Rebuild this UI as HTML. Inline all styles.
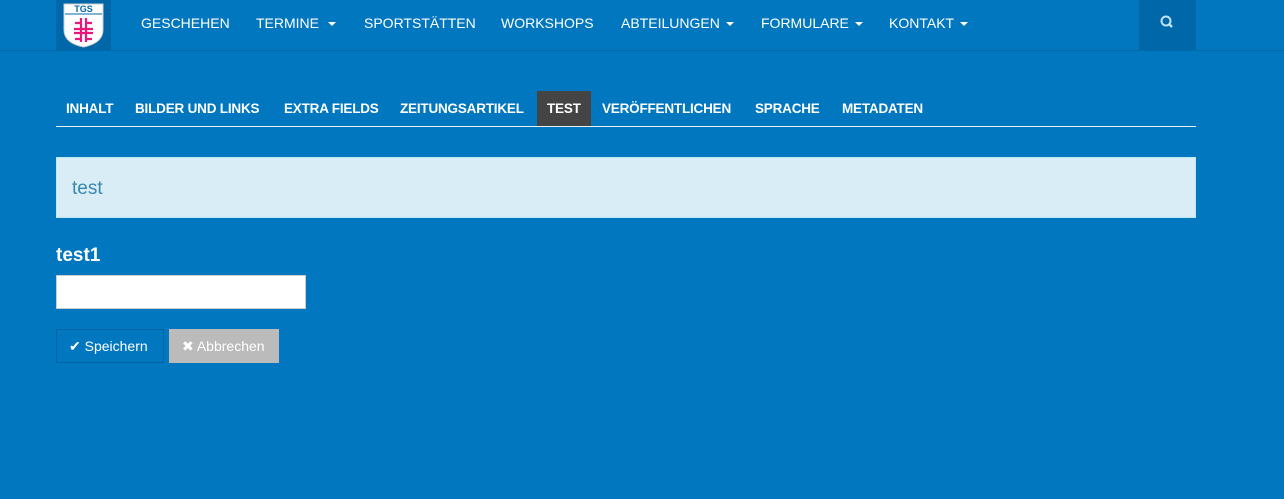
<!DOCTYPE html>
<html><head><meta charset="utf-8"><style>
*{box-sizing:border-box;margin:0;padding:0}
body{width:1284px;height:499px;background:#0077be;font-family:"Liberation Sans",Arial,sans-serif;color:#fff;position:relative;overflow:hidden}
.nav{position:absolute;left:0;top:0;width:1284px;height:51px;border-bottom:1px solid #0068a6}
.logo{position:absolute;left:56px;top:0;width:55px;height:50px;background:#0068a8}
.nav a{position:absolute;top:15px;font-size:14px;color:#fff;white-space:nowrap}
.caret{display:inline-block;width:0;height:0;border-left:4px solid transparent;border-right:4px solid transparent;border-top:4px solid #fff;vertical-align:middle;margin-left:6px}
.search{position:absolute;left:1139px;top:0;width:57px;height:50px;background:#0068a8}
.tabs a{position:absolute;top:91px;height:35px;line-height:35px;font-size:13.5px;font-weight:bold;color:#fff;padding:0 10px;letter-spacing:-0.2px}
.line{position:absolute;left:56px;top:126px;width:1140px;height:1px;background:#e8f2f8}
.alert{position:absolute;left:56px;top:157px;width:1140px;height:61px;background:#d9edf7;border:1px solid #bce8f1;color:#3a87ad;font-size:19px;padding:20px 0 0 15px}
.lbl{position:absolute;left:56px;top:245px;font-size:19px;font-weight:bold}
.inp{position:absolute;left:56px;top:275px;width:250px;height:34px;background:#fff;border:1px solid #ccc}
.btn{position:absolute;top:329px;height:34px;line-height:34px;font-size:14px;color:#fff;padding-left:12px}
</style></head><body>
<div class="nav">
<div class="logo"><svg width="55" height="50" viewBox="0 0 55 50">
<path d="M8 4 H47 V30 C47 40 38 45 27.5 47 C17 45 8 40 8 30 Z" fill="#fff" stroke="#ccc" stroke-width="1"/>
<text x="27.5" y="12" font-size="9" font-weight="bold" fill="#0068a8" text-anchor="middle" font-family="Liberation Sans">TGS</text>
<line x1="9" y1="14" x2="46" y2="14" stroke="#0068a8" stroke-width="1"/>
<g stroke="#e6197a" stroke-width="2.2" fill="none">
<line x1="25" y1="18" x2="25" y2="42"/><line x1="30" y1="18" x2="30" y2="42"/>
<line x1="18" y1="29" x2="37" y2="29"/><line x1="18" y1="33" x2="37" y2="33"/>
<path d="M19 23 H25 M30 23 H36 M19 39 H25 M30 39 H36"/>
</g></svg></div>
<a style="left:141px">GESCHEHEN</a>
<a style="left:256px">TERMINE<span class="caret" style="margin-left:9px"></span></a>
<a style="left:364px">SPORTSTÄTTEN</a>
<a style="left:501px">WORKSHOPS</a>
<a style="left:621px">ABTEILUNGEN<span class="caret"></span></a>
<a style="left:761px">FORMULARE<span class="caret"></span></a>
<a style="left:889px">KONTAKT<span class="caret"></span></a>
<div class="search"><svg width="57" height="50"><circle cx="27" cy="21" r="4.5" stroke="#bfe3f7" stroke-width="2" fill="none"/><line x1="30.5" y1="24.5" x2="33" y2="27" stroke="#bfe3f7" stroke-width="2.4"/></svg></div>
</div>
<div class="tabs">
<a style="left:56px">INHALT</a>
<a style="left:125px">BILDER UND LINKS</a>
<a style="left:274px">EXTRA FIELDS</a>
<a style="left:390px">ZEITUNGSARTIKEL</a>
<a style="left:537px;width:54px;background:#444">TEST</a>
<a style="left:592px">VERÖFFENTLICHEN</a>
<a style="left:745px">SPRACHE</a>
<a style="left:832px">METADATEN</a>
</div>
<div class="line"></div>
<div class="alert">test</div>
<div class="lbl">test1</div>
<div class="inp"></div>
<div class="btn" style="left:56px;width:108px;border:1px solid #0065a3;line-height:32px">✔ Speichern</div>
<div class="btn" style="left:169px;width:110px;background:#bbb;padding-left:13px">✖ Abbrechen</div>
</body></html>
